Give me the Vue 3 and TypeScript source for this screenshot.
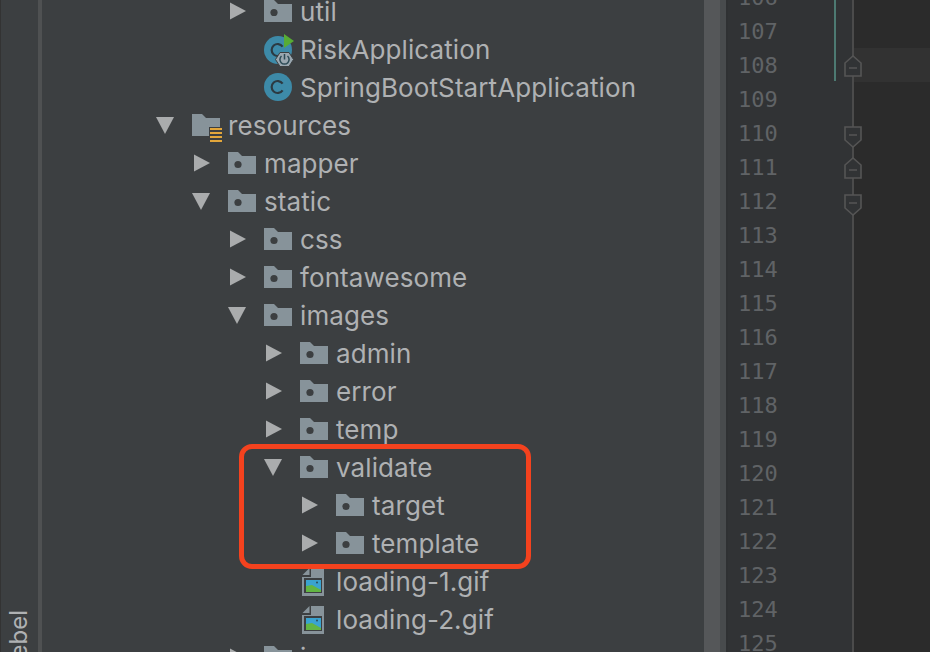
<script setup lang="ts">
type Kind = 'folder' | 'res' | 'spring' | 'class' | 'gif'
interface Row { name: string; level: number; kind: Kind; arrow?: 'open' | 'closed' }

const rows: Row[] = [
  { name: 'util', level: 2, kind: 'folder', arrow: 'closed' },
  { name: 'RiskApplication', level: 2, kind: 'spring' },
  { name: 'SpringBootStartApplication', level: 2, kind: 'class' },
  { name: 'resources', level: 0, kind: 'res', arrow: 'open' },
  { name: 'mapper', level: 1, kind: 'folder', arrow: 'closed' },
  { name: 'static', level: 1, kind: 'folder', arrow: 'open' },
  { name: 'css', level: 2, kind: 'folder', arrow: 'closed' },
  { name: 'fontawesome', level: 2, kind: 'folder', arrow: 'closed' },
  { name: 'images', level: 2, kind: 'folder', arrow: 'open' },
  { name: 'admin', level: 3, kind: 'folder', arrow: 'closed' },
  { name: 'error', level: 3, kind: 'folder', arrow: 'closed' },
  { name: 'temp', level: 3, kind: 'folder', arrow: 'closed' },
  { name: 'validate', level: 3, kind: 'folder', arrow: 'open' },
  { name: 'target', level: 4, kind: 'folder', arrow: 'closed' },
  { name: 'template', level: 4, kind: 'folder', arrow: 'closed' },
  { name: 'loading-1.gif', level: 3, kind: 'gif' },
  { name: 'loading-2.gif', level: 3, kind: 'gif' },
  { name: 'js', level: 2, kind: 'folder', arrow: 'closed' },
]
const indent = (r: Row) => ({ paddingLeft: `${r.level * 36}px` })
const lineNumbers = Array.from({ length: 20 }, (_, i) => 106 + i)
</script>

<template>
  <div class="ide">
    <aside class="stripe"><span class="stripe-label">JRebel</span></aside>
    <section class="tree">
      <div v-for="r in rows" :key="r.name" class="row" :style="indent(r)">
        <span class="arrow-slot">
          <svg v-if="r.arrow" width="20" height="20" viewBox="0 0 20 20">
            <path v-if="r.arrow === 'closed'" d="M2 1.5 L18 10 L2 18.5 Z" fill="#aaacad" />
            <path v-else d="M0 2 L18 2 L9 19 Z" fill="#aaacad" />
          </svg>
        </span>
        <span class="icon-slot">
          <svg v-if="r.kind === 'folder'" width="28" height="22" viewBox="0 0 28 22">
            <path d="M0 0 H10 L14 4 H28 V22 H0 Z" fill="#87939a" />
            <circle cx="10" cy="12.5" r="3.6" fill="#3c3f41" />
          </svg>
          <svg v-else-if="r.kind === 'res'" width="30" height="34" viewBox="0 0 30 34">
            <path d="M0 6 H10 L14 10 H28 V28 H0 Z" fill="#87939a" />
            <rect x="17" y="19" width="13" height="15" fill="#3c3f41" />
            <path d="M18 21 H30 M18 25 H30 M18 29 H30 M18 33 H30" stroke="#e2a63b" stroke-width="2" />
          </svg>
          <svg v-else-if="r.kind === 'class'" width="28" height="28" viewBox="0 0 28 28">
            <circle cx="14" cy="14" r="14" fill="#3d8aa8" />
            <path d="M18.6 10.6 A6 6 0 1 0 18.6 17.4" fill="none" stroke="#2c3a42" stroke-width="2.2" />
          </svg>
          <svg v-else-if="r.kind === 'spring'" width="32" height="36" viewBox="0 0 32 36">
            <circle cx="14" cy="19" r="14" fill="#3d8aa8" />
            <path d="M18.6 15.6 A6 6 0 1 0 18.6 22.4" fill="none" stroke="#2c3a42" stroke-width="2.2" />
            <path d="M20 3 L30 10 L20 17 Z" fill="#57ac34" />
            <path d="M16 21.5 H25 L29.5 28.5 L25 35.5 H16 L11.5 28.5 Z" fill="#9aa7b0" stroke="#3c3f41" stroke-width="1" />
            <path d="M17.5 25 A4.6 4.6 0 1 0 23.5 25" fill="none" stroke="#2c4a55" stroke-width="1.5" />
            <path d="M20.5 23 V28.5" stroke="#2c4a55" stroke-width="1.5" />
          </svg>
          <svg v-else width="24" height="30" viewBox="0 0 24 30">
            <path d="M9.5 2 V9 H2.5 Z" fill="#87939a" />
            <path d="M11 2 H24 V30 H2 V11 H11 Z" fill="#87939a" />
            <rect x="4" y="12" width="18" height="15" fill="#3c3f41" />
            <rect x="6" y="14" width="15" height="12" fill="#3aa3d0" />
            <path d="M6 20 L12 19 L21 24 V26 H6 Z" fill="#62b543" />
            <circle cx="17" cy="16.5" r="1" fill="#2c4a55" />
          </svg>
        </span>
        <span class="name">{{ r.name }}</span>
      </div>
      <div class="highlight"></div>
    </section>
    <div class="scrollbar"><div class="thumb"></div></div>
    <section class="gutter">
      <div v-for="n in lineNumbers" :key="n" class="line-no">{{ n }}</div>
      <div class="change-bar"></div>
    </section>
    <section class="fold-col">
      <div class="fold-line"></div>
      <svg class="fold f1" width="18" height="22" viewBox="0 0 18 22"><path d="M1 21 V8 L9 1 L17 8 V21 Z M5 13 H13" fill="#313335" stroke="#555" stroke-width="1.6" /></svg>
      <svg class="fold f2" width="18" height="22" viewBox="0 0 18 22"><path d="M1 1 V14 L9 21 L17 14 V1 Z M5 9 H13" fill="#313335" stroke="#555" stroke-width="1.6" /></svg>
      <svg class="fold f3" width="18" height="22" viewBox="0 0 18 22"><path d="M1 21 V8 L9 1 L17 8 V21 Z M5 13 H13" fill="#313335" stroke="#555" stroke-width="1.6" /></svg>
      <svg class="fold f4" width="18" height="22" viewBox="0 0 18 22"><path d="M1 1 V14 L9 21 L17 14 V1 Z M5 9 H13" fill="#313335" stroke="#555" stroke-width="1.6" /></svg>
    </section>
    <main class="editor"><div class="caret-row"></div></main>
  </div>
</template>

<style scoped>
.ide {
  display: flex;
  width: 930px;
  height: 652px;
  overflow: hidden;
  background: #2b2b2b;
  position: relative;
}
.stripe {
  width: 42px;
  flex: none;
  box-sizing: border-box;
  background: #3c3f41;
  border-left: 1px solid #333;
  border-right: 4px solid #4f5152;
  position: relative;
}
.stripe-label {
  position: absolute;
  left: 5px;
  top: 610px;
  writing-mode: vertical-rl;
  transform: rotate(180deg);
  color: #afb1b3;
  font: 24px/26px "Inter", "Liberation Sans", sans-serif;
}
.tree {
  width: 662px;
  flex: none;
  background: #3c3f41;
  padding: 0 0 0 114px;
  box-sizing: border-box;
  margin-top: -8px;
  height: 670px;
  position: relative;
}
.row {
  height: 38px;
  display: flex;
  align-items: center;
  white-space: nowrap;
}
.arrow-slot {
  width: 36px;
  flex: none;
  display: flex;
  align-items: center;
}
.icon-slot {
  width: 36px;
  flex: none;
  display: flex;
  align-items: center;
}
.name {
  align-self: flex-start;
  padding-top: 1px;
  color: #afb1b3;
  font: 26px/38px "Inter", "Liberation Sans", sans-serif;
  letter-spacing: 0.1px;
}
.highlight {
  position: absolute;
  left: 197px;
  top: 452px;
  width: 282px;
  height: 115px;
  border: 5px solid #f4421e;
  border-radius: 13px;
}
.scrollbar {
  width: 24px;
  flex: none;
  background: #484b4d;
  border-right: 2px solid #2f3133;
  box-sizing: border-box;
}
.thumb {
  width: 16px;
  height: 100%;
  background: #555759;
}
.gutter {
  width: 124px;
  flex: none;
  background: #313335;
  margin-top: -19px;
  height: 671px;
  position: relative;
  box-sizing: border-box;
}
.line-no {
  height: 34px;
  padding-left: 10px;
  color: #606366;
  font: 22px/34px "DejaVu Sans Mono", "Liberation Mono", monospace;
}
.change-bar {
  position: absolute;
  left: 106px;
  top: 19px;
  width: 2px;
  height: 81px;
  background: #4d7a72;
}
.fold-col {
  width: 0;
  flex: none;
  position: relative;
}
.fold-line {
  position: absolute;
  left: 0;
  top: 0;
  width: 2px;
  height: 652px;
  background: #4b4b4b;
}
.fold {
  position: absolute;
  left: -8px;
}
.f1 { top: 55px; }
.f2 { top: 126px; }
.f3 { top: 157px; }
.f4 { top: 194px; }
.editor {
  flex: 1;
  background: #2b2b2b;
  margin-left: 2px;
}
.caret-row {
  height: 34px;
  margin-top: 48px;
  background: #323232;
}
</style>
